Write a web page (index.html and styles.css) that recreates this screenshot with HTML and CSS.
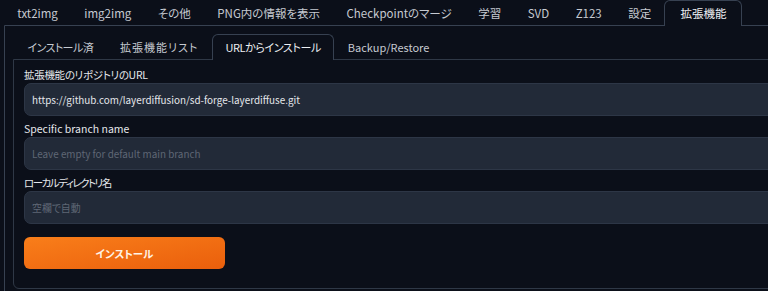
FILE: index.html
```html
<!DOCTYPE html>
<html lang="ja">
<head>
<meta charset="utf-8">
<link rel="stylesheet" href="styles.css">
</head>
<body>
<div class="app">
  <div class="tabbar top">
    <div class="tab">txt2img</div>
    <div class="tab">img2img</div>
    <div class="tab">その他</div>
    <div class="tab">PNG内の情報を表示</div>
    <div class="tab">Checkpointのマージ</div>
    <div class="tab">学習</div>
    <div class="tab">SVD</div>
    <div class="tab">Z123</div>
    <div class="tab">設定</div>
    <div class="tab active">拡張機能</div>
  </div>
  <div class="panel outer">
    <div class="tabbar sub">
      <div class="tab kana">インストール済</div>
      <div class="tab wide">拡張機能リスト</div>
      <div class="tab active">URLからインストール</div>
      <div class="tab">Backup/Restore</div>
    </div>
    <div class="panel inner">
      <div class="field">
        <label class="label ja">拡張機能のリポジトリのURL</label>
        <input class="input" type="text" value="https://github.com/layerdiffusion/sd-forge-layerdiffuse.git">
      </div>
      <div class="field">
        <label class="label">Specific branch name</label>
        <input class="input" type="text" placeholder="Leave empty for default main branch">
      </div>
      <div class="field">
        <label class="label kana">ローカルディレクトリ名</label>
        <input class="input" type="text" placeholder="空欄で自動">
      </div>
      <button class="btn">インストール</button>
    </div>
  </div>
</div>
</body>
</html>
```
FILE: styles.css
```css
html, body {
  margin: 0;
  background: #0b0f19;
  overflow: hidden;
}
body {
  font-family: "Noto Sans CJK JP", "Noto Sans", sans-serif;
  font-feature-settings: "palt";
  color: #e5e7eb;
}
.app {
  width: 1000px;
  padding-left: 4px;
}
.tabbar {
  display: flex;
  margin-bottom: -1px;
  position: relative;
  z-index: 1;
}
.tab {
  padding: 0 12.25px;
  color: #c6cad1;
  font-size: 11.5px;
  border: 1px solid transparent;
  border-bottom: none;
  border-radius: 6px 6px 0 0;
}
.top .tab {
  height: 24px;
  line-height: 24px;
}
.tab.active {
  color: #eef0f3;
  border-color: #374151;
  background: #0b0f19;
  padding: 0 15px 1px;
}
.sub .tab {
  height: 24px;
  line-height: 25px;
  font-size: 11px;
  padding: 0 12.5px;
}
.sub .tab.kana {
  letter-spacing: -0.6px;
}
.sub .tab.wide {
  letter-spacing: 1px;
}
.sub .tab.active {
  padding: 0 12.5px 1px;
  letter-spacing: -0.4px;
}
.panel {
  border: 1px solid #374151;
  border-radius: 0 0 6px 6px;
}
.outer {
  padding: 8px;
}
.sub {
  padding-left: 1px;
}
.inner {
  border-color: #2f3846;
  padding: 6px 10px 19px;
  display: flex;
  flex-direction: column;
  gap: 4px;
}
.field {
  display: flex;
  flex-direction: column;
}
.label {
  font-size: 10.5px;
  line-height: 17px;
  color: #e5e7eb;
}
.label.ja {
  letter-spacing: -0.3px;
}
.label.kana {
  letter-spacing: -1.5px;
}
.input {
  box-sizing: border-box;
  height: 33px;
  border: 1px solid #2d3646;
  border-radius: 7px;
  background: #222a38;
  color: #e5e7eb;
  font-family: inherit;
  font-feature-settings: "palt";
  font-size: 9.9px;
  padding: 0 7px;
  outline: none;
}
.input::placeholder {
  color: #5f6775;
}
.btn {
  margin-top: 9px;
  width: 201px;
  height: 32px;
  border: none;
  border-radius: 6px;
  background: linear-gradient(to bottom right, #f97e1a, #ea5f0c);
  color: #fff3e6;
  font-family: inherit;
  font-feature-settings: "palt";
  font-weight: bold;
  font-size: 10.5px;
}
```
